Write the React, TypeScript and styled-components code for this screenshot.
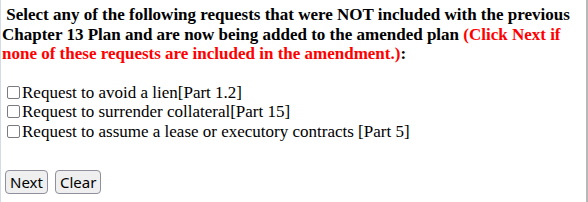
import { createGlobalStyle, styled } from "styled-components"

const GlobalStyle = createGlobalStyle`
  html, body {
    margin: 0;
    padding: 0;
    background: #ffffff;
  }
`

const requests = [
  "Request to avoid a lien[Part 1.2]",
  "Request to surrender collateral[Part 15]",
  "Request to assume a lease or executory contracts [Part 5]",
]

function App() {
  return (
    <>
      <GlobalStyle />
      <Frame>
        <Panel>
          <Heading>
            &nbsp;Select any of the following requests that were NOT included with the previous
            Chapter 13 Plan and are now being added to the amended plan{" "}
            <Warning>(Click Next if none of these requests are included in the amendment.)</Warning>:
          </Heading>
          <RequestList>
            {requests.map((label) => (
              <RequestRow key={label}>
                <Check type="checkbox" />
                {label}
              </RequestRow>
            ))}
          </RequestList>
          <Actions>
            <Button type="button">Next</Button>
            <Button type="button">Clear</Button>
          </Actions>
        </Panel>
      </Frame>
    </>
  )
}

export default App

const Frame = styled.div`
  width: 588px;
  height: 202px;
  box-sizing: border-box;
  border-left: 1px solid #d4dbe6;
  border-right: 2px solid #b8b8b8;
  overflow: hidden;
`

const Panel = styled.div`
  width: 585px;
  box-sizing: border-box;
  padding: 5px 0 0 1px;
  font-family: "Liberation Serif", "Times New Roman", serif;
  color: #000000;
`

const Heading = styled.div`
  font-size: 17px;
  font-weight: bold;
  line-height: 19.5px;
`

const Warning = styled.span`
  color: #ff0000;
`

const RequestList = styled.div`
  margin-top: 19px;
  display: flex;
  flex-direction: column;
`

const RequestRow = styled.label`
  display: flex;
  align-items: center;
  font-size: 17px;
  line-height: 19.5px;
`

const Check = styled.input`
  appearance: none;
  box-sizing: border-box;
  width: 13px;
  height: 13px;
  margin: 0 2px 0 5px;
  border: 1px solid #7a7a80;
  border-radius: 2px;
  background: #ffffff;
  flex-shrink: 0;
`

const Actions = styled.div`
  margin-top: 29px;
  display: flex;
  gap: 7px;
  padding-left: 3px;
`

const Button = styled.button`
  font-family: "Noto Sans", "Open Sans", sans-serif;
  font-size: 15px;
  height: 24px;
  padding: 0 4px;
  background: #efefef;
  border: 1px solid #8f8f9d;
  border-radius: 4px;
  color: #000000;
`
